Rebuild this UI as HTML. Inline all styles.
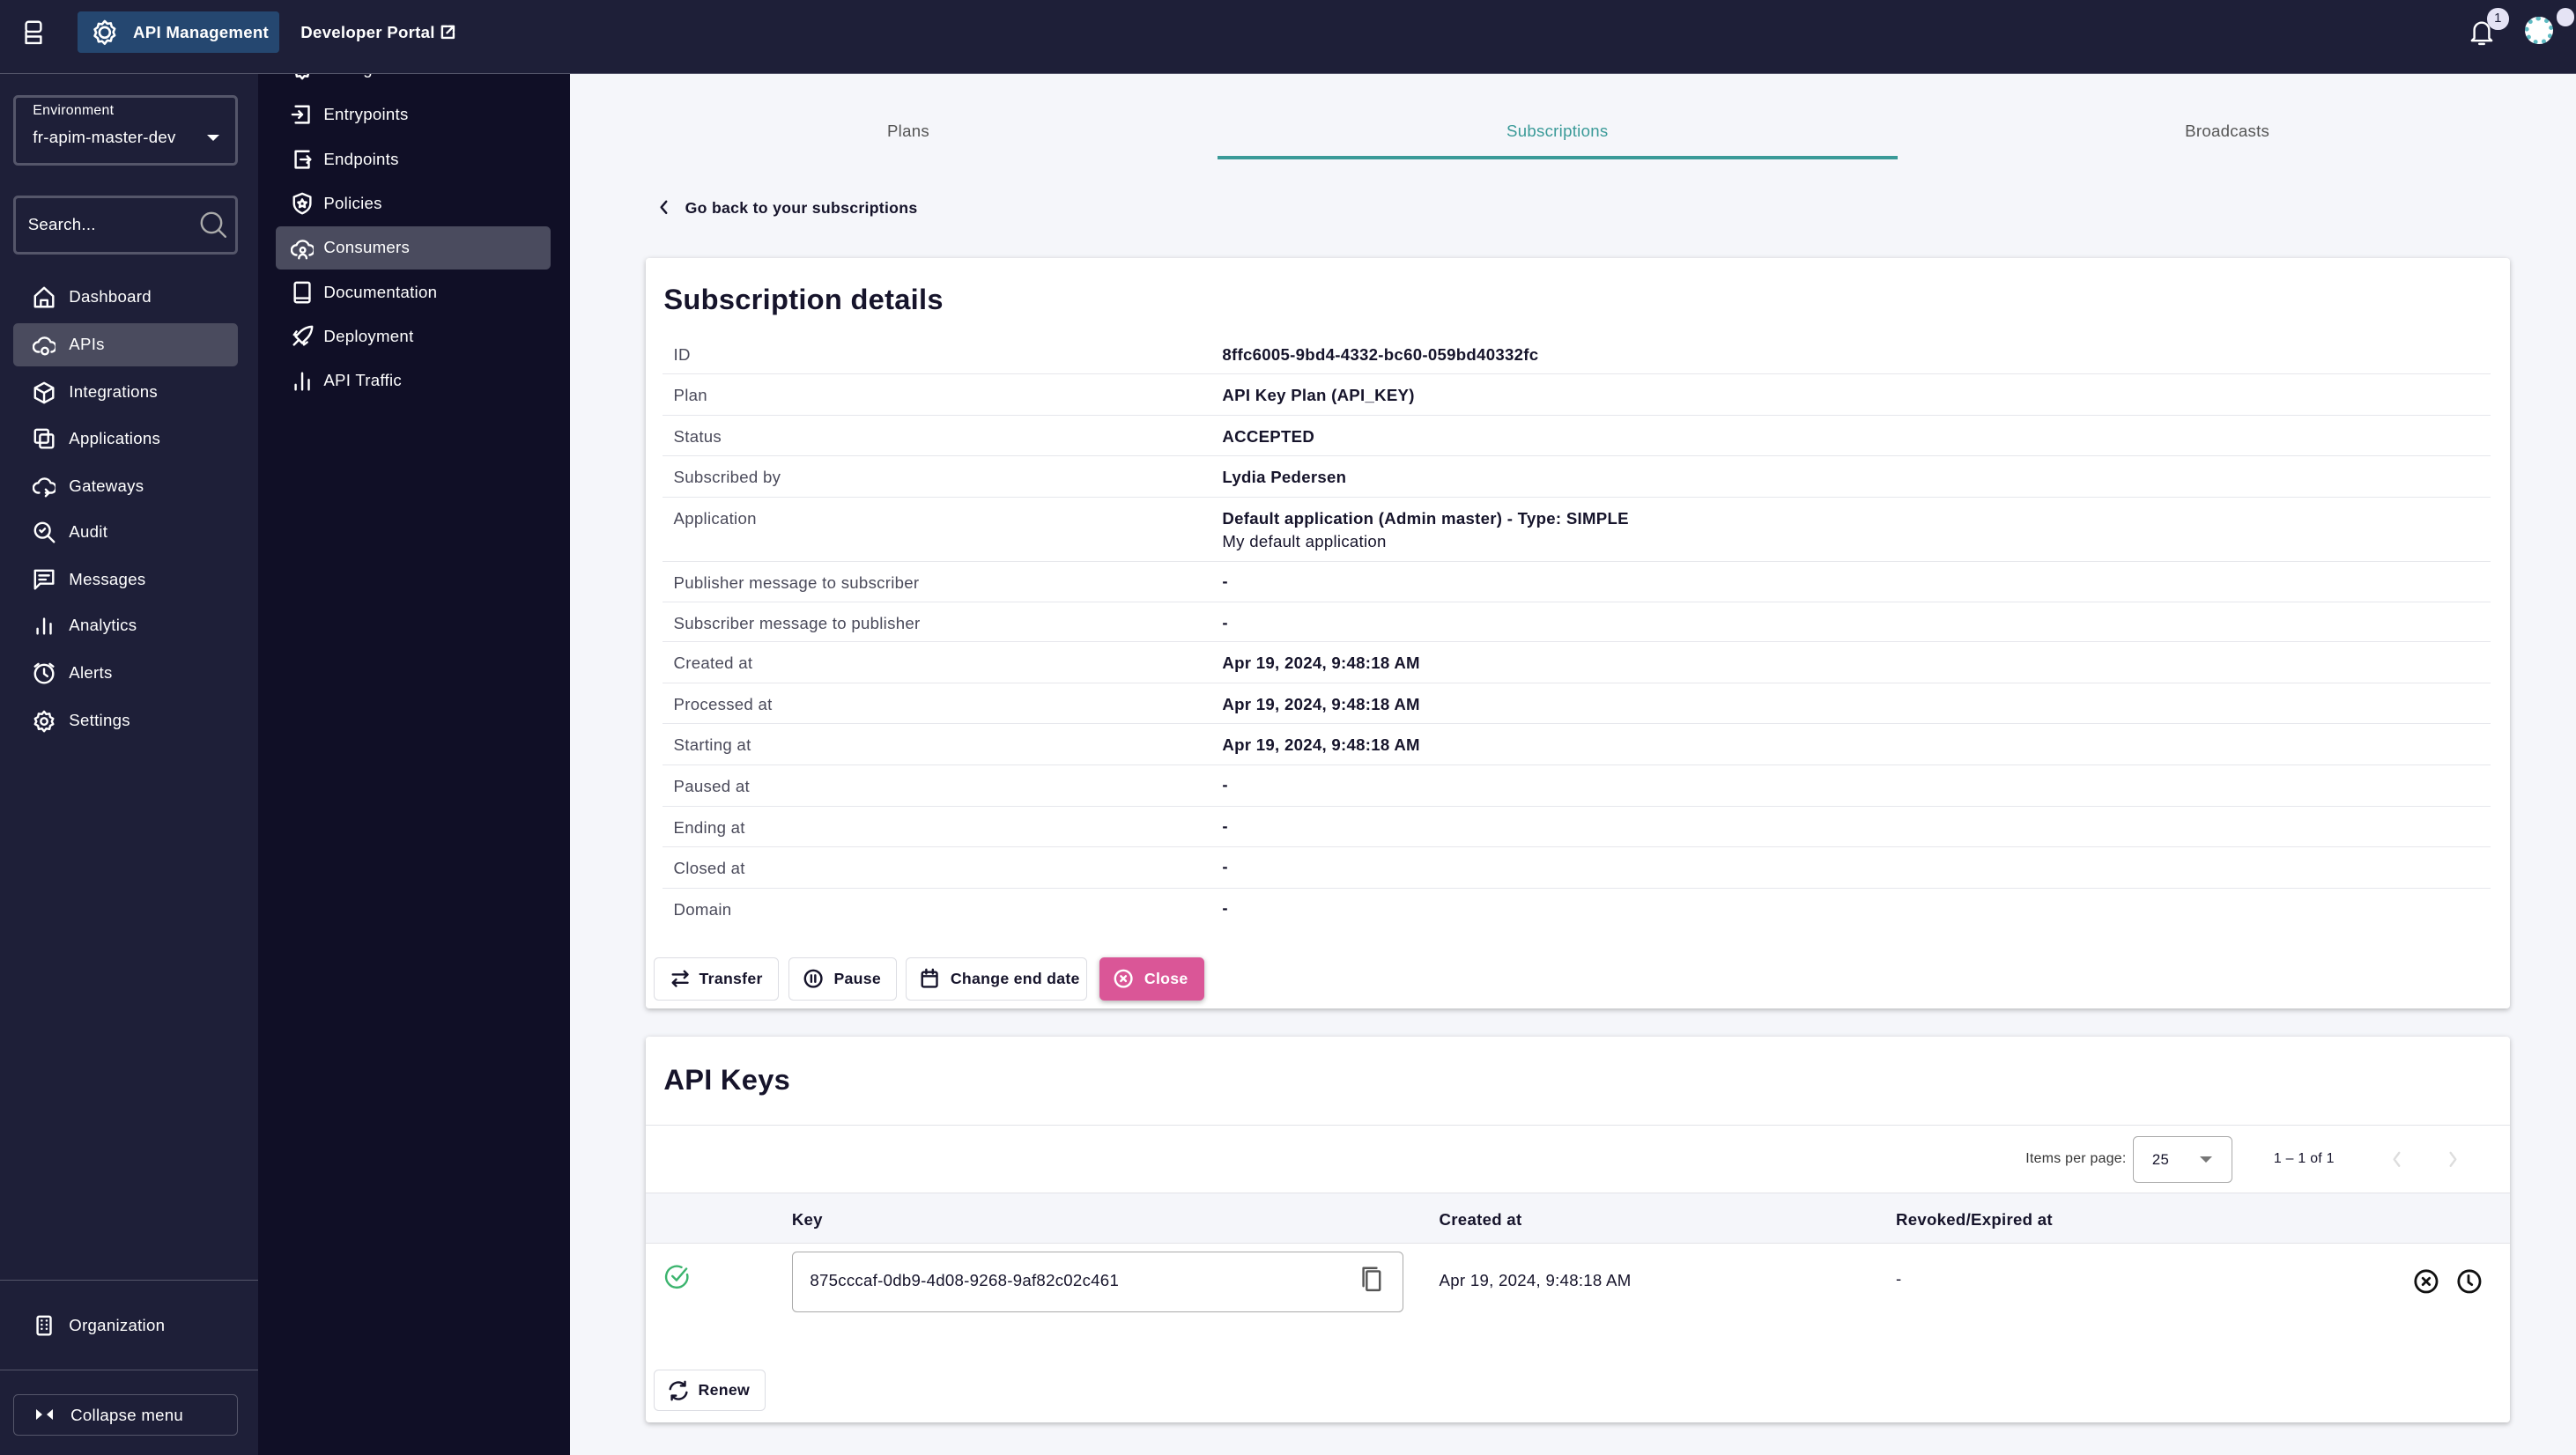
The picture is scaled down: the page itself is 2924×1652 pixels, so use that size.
<!DOCTYPE html>
<html><head><meta charset="utf-8"><style>
*{box-sizing:border-box;margin:0;padding:0}
html,body{width:2924px;height:1652px;overflow:hidden;background:#f5f6fa}
#r{zoom:1.86480;width:1568px;height:886px;position:relative;font-family:"Liberation Sans",sans-serif;font-size:10px;color:#16142b;letter-spacing:.15px}
.a{position:absolute}
svg{position:absolute;fill:none;stroke:currentColor;stroke-width:1.3;stroke-linecap:round;stroke-linejoin:round}
.top{left:0;top:0;width:1568px;height:45px;background:#1e1f38;border-bottom:1px solid #55566a;z-index:5}
.tz{z-index:6}
.sb{left:0;top:45px;width:157px;height:841px;background:#1e1f38;color:#fff}
.sb2{left:157px;top:45px;width:190px;height:841px;background:#100f26;color:#fff}
.ni{position:absolute;left:8px;width:137px;height:26px;border-radius:3px;font-size:10px;color:#fff}
.ni span{position:absolute;left:34px;top:7px}
.ni svg{left:12px;top:6px;width:14px;height:14px}
.n2{position:absolute;left:11px;width:167px;height:26px;border-radius:3px}
.n2 span{position:absolute;left:29px;top:7px}
.n2 svg{left:9px;top:6px;width:14px;height:14px}
.card{background:#fff;box-shadow:0 1px 3px rgba(0,0,0,.25);border-radius:2px}
.row{position:absolute;left:10px;width:1113px;border-bottom:1px solid #e6e7ec}
.row .l{position:absolute;left:7px;color:#4a4a5a}
.row .v{position:absolute;left:341px;font-weight:bold;color:#16142b}
.btn{position:absolute;top:583px;height:26px;border:1px solid #dcdde3;border-radius:3px;background:#fff;font-weight:bold;font-size:9.5px}
.btn span{position:absolute;top:7px}
.btn svg{top:6px;width:13px;height:13px}
</style></head><body><div id="r">
<div class="a top"></div>
<svg class="tz" style="left:13px;top:11px;width:16px;height:18px;color:#fff" viewBox="0 0 16 18"><rect x="3" y="2" width="9" height="6" rx="1.5"/><path d="M3 8v3h9M3 11v4h9v-4"/></svg>
<div class="a tz" style="left:47px;top:7px;width:123px;height:25px;background:#254770;border-radius:2px"></div>
<svg class="tz" style="left:55px;top:11px;width:17px;height:17px;color:#fff" viewBox="0 0 16 16"><circle cx="8" cy="8" r="3"/><path d="M8 1.5l1.5 1.5 2-.3.5 2 1.7 1.2-.8 1.9.8 1.9-1.7 1.2-.5 2-2-.3L8 14.5 6.5 13l-2 .3-.5-2L2.3 10l.8-1.9-.8-1.9L4 5l.5-2 2 .3z"/></svg>
<div class="a tz" style="left:81px;top:14px;color:#fff;font-weight:bold;font-size:10px">API Management</div>
<div class="a tz" style="left:183px;top:14px;color:#fff;font-weight:bold;font-size:10px">Developer Portal</div>
<svg class="tz" style="left:268px;top:15px;width:9px;height:9px;color:#fff" viewBox="0 0 9 9"><path d="M4 1H1v7h7V5M5 1h3v3M8 1L4 5"/></svg>
<svg class="tz" style="left:1503px;top:11px;width:15px;height:17px;color:#fff" viewBox="0 0 15 17"><path d="M3 12V7a4.5 4.5 0 0 1 9 0v5l1.5 1.5h-12zM6 15.5h3"/></svg>
<div class="a tz" style="left:1514px;top:5px;width:13px;height:13px;border-radius:50%;background:#e5e3f5;color:#1e1f38;font-size:8px;text-align:center;line-height:13px">1</div>
<div class="a tz" style="left:1537px;top:10px;width:17px;height:17px;border-radius:50%;background:#fff;border:3px dotted #5ebac2"></div>
<div class="a tz" style="left:1556px;top:5px;width:11px;height:11px;border-radius:50%;background:#e5e3f5"></div>

<div class="a sb">
<div class="a" style="left:8px;top:13px;width:137px;height:43px;border:2px solid #55566a;border-radius:3px"></div>
<div class="a" style="left:20px;top:18px;font-size:8.5px">Environment</div>
<div class="a" style="left:20px;top:33px;font-size:10px">fr-apim-master-dev</div>
<div class="a" style="left:126px;top:37px;border:4px solid transparent;border-top:4px solid #fff"></div>
<div class="a" style="left:8px;top:74px;width:137px;height:36px;border:2px solid #55566a;border-radius:3px"></div>
<div class="a" style="left:17px;top:86px;font-size:10px">Search...</div>
<svg style="left:121px;top:83px;width:17px;height:17px;color:#aaa" viewBox="0 0 17 17"><circle cx="7.5" cy="7.5" r="6"/><path d="M12 12l4 4"/></svg>
<div class="ni" style="top:123px"><svg viewBox="0 0 14 14"><path d="M1.5 6.5L7 1.5l5.5 5V13h-11zM5 13V9h4v4"/></svg><span>Dashboard</span></div>
<div class="ni" style="top:152px;background:#4a4b5e"><svg viewBox="0 0 14 14"><path d="M4 11H3.5a3 3 0 0 1 0-6 4 4 0 0 1 7.5 0 3 3 0 0 1 .5 6"/><circle cx="7.5" cy="10.5" r="2"/></svg><span>APIs</span></div>
<div class="ni" style="top:181px"><svg viewBox="0 0 14 14"><path d="M7 1l5.5 3v6L7 13 1.5 10V4zM1.5 4L7 7l5.5-3M7 7v6"/></svg><span>Integrations</span></div>
<div class="ni" style="top:209px"><svg viewBox="0 0 14 14"><rect x="1.5" y="1.5" width="8" height="8" rx="1"/><rect x="4.5" y="4.5" width="8" height="8" rx="1"/></svg><span>Applications</span></div>
<div class="ni" style="top:238px"><svg viewBox="0 0 14 14"><path d="M4 11H3.5a3 3 0 0 1 0-6 4 4 0 0 1 7.5 0 3 3 0 0 1 .5 6H8"/><path d="M8 9l2 2-2 2"/></svg><span>Gateways</span></div>
<div class="ni" style="top:266px"><svg viewBox="0 0 14 14"><circle cx="6" cy="6" r="4.5"/><path d="M9.5 9.5L13 13M4.5 6l1 1 2-2"/></svg><span>Audit</span></div>
<div class="ni" style="top:295px"><svg viewBox="0 0 14 14"><path d="M1.5 1.5h11v8h-8l-3 3zM4 4.5h6M4 7h4"/></svg><span>Messages</span></div>
<div class="ni" style="top:323px"><svg viewBox="0 0 14 14"><path d="M3 12V9M7 12V3M11 12V6"/></svg><span>Analytics</span></div>
<div class="ni" style="top:352px"><svg viewBox="0 0 14 14"><circle cx="7" cy="7" r="5.5"/><path d="M7 4v3l2 1.5M1.5 2.5l2-1.5M12.5 2.5l-2-1.5"/></svg><span>Alerts</span></div>
<div class="ni" style="top:381px"><svg viewBox="0 0 14 14"><circle cx="7" cy="7" r="2"/><path d="M7 1l1.3 1.6 2-.3.4 2 1.8 1L11.7 7l.8 1.7-1.8 1-.4 2-2-.3L7 13l-1.3-1.6-2 .3-.4-2-1.8-1L2.3 7l-.8-1.7 1.8-1 .4-2 2 .3z"/></svg><span>Settings</span></div>
<div class="a" style="left:0;top:734px;width:157px;border-top:1px solid #55566a"></div>
<div class="ni" style="top:749px"><svg viewBox="0 0 14 14"><rect x="3" y="1.5" width="8" height="11" rx="1"/><path d="M5.5 4h.1M8.5 4h.1M5.5 6.5h.1M8.5 6.5h.1M5.5 9h.1M8.5 9h.1"/></svg><span>Organization</span></div>
<div class="a" style="left:0;top:789px;width:157px;border-top:1px solid #55566a"></div>
<div class="a" style="left:8px;top:804px;width:137px;height:25px;border:1px solid #55566a;border-radius:3px"></div>
<div class="a" style="left:22px;top:813px;width:0;height:0;border:3.5px solid transparent;border-left:4px solid #fff"></div>
<div class="a" style="left:28px;top:813px;width:0;height:0;border:3.5px solid transparent;border-right:4px solid #fff;margin-left:-3px"></div>
<div class="a" style="left:43px;top:811px;font-size:10px">Collapse menu</div>
</div>

<div class="a sb2">
<svg style="left:20px;top:-10px;width:14px;height:14px;color:#fff" viewBox="0 0 14 14"><circle cx="7" cy="7" r="2"/><path d="M7 1l1.3 1.6 2-.3.4 2 1.8 1L11.7 7l.8 1.7-1.8 1-.4 2-2-.3L7 13l-1.3-1.6-2 .3-.4-2-1.8-1L2.3 7l-.8-1.7 1.8-1 .4-2 2 .3z"/></svg>
<div class="a" style="left:40px;top:-9px;font-size:10px;color:#fff">Configuration</div>
<div class="n2" style="top:12px"><svg viewBox="0 0 14 14"><path d="M3 2h8v10H3M1 7h6M5 5l2 2-2 2"/></svg><span>Entrypoints</span></div>
<div class="n2" style="top:39px"><svg viewBox="0 0 14 14"><path d="M11 2H3v10h8V9M6 7h6M10 5l2 2-2 2"/></svg><span>Endpoints</span></div>
<div class="n2" style="top:66px"><svg viewBox="0 0 14 14"><path d="M7 1l5 2v4c0 3-2.5 5-5 6-2.5-1-5-3-5-6V3z"/><path d="M7 4.5l.8 1.6 1.7.2-1.2 1.2.3 1.7L7 8.4l-1.6.8.3-1.7-1.2-1.2 1.7-.2z"/></svg><span>Policies</span></div>
<div class="n2" style="top:93px;background:#4a4b5e"><svg viewBox="0 0 14 14"><path d="M3.5 11a3 3 0 0 1 0-6 4 4 0 0 1 7.5 0 3 3 0 0 1 .5 6"/><circle cx="7.3" cy="8" r="1.5"/><path d="M5 13a2.3 2.3 0 0 1 4.6 0"/></svg><span>Consumers</span></div>
<div class="n2" style="top:120px"><svg viewBox="0 0 14 14"><rect x="2.5" y="1" width="9" height="12" rx="1"/><path d="M2.5 10.5h9"/></svg><span>Documentation</span></div>
<div class="n2" style="top:147px"><svg viewBox="0 0 14 14"><path d="M5 9l-2-2 3-3c2-2 5-3 7-3 0 2-1 5-3 7l-3 3-2-2zM5 9l-3 3M4 6H2l1.5-2M8 10v2l2-1.5"/></svg><span>Deployment</span></div>
<div class="n2" style="top:174px"><svg viewBox="0 0 14 14"><path d="M3 12V9M7 12V2M11 12V6"/></svg><span>API Traffic</span></div>
</div>

<div class="a" style="left:540px;top:74px;color:#555">Plans</div>
<div class="a" style="left:917px;top:74px;color:#3a9a98">Subscriptions</div>
<div class="a" style="left:1330px;top:74px;color:#555">Broadcasts</div>
<div class="a" style="left:741px;top:95px;width:414px;height:2px;background:#3a9a98"></div>
<svg style="left:400px;top:121px;width:8px;height:10px" viewBox="0 0 8 10"><path d="M5.5 1.5L2.5 5l3 3.5"/></svg>
<div class="a" style="left:417px;top:121px;font-weight:bold;font-size:9.5px">Go back to your subscriptions</div>

<div class="a card" style="left:393px;top:157px;width:1135px;height:457px">
<div class="a" style="left:11px;top:15px;font-size:17.5px;font-weight:bold">Subscription details</div>
<div class="row" style="top:46px;height:25px"><span class="l" style="top:7px">ID</span><span class="v" style="top:7px">8ffc6005-9bd4-4332-bc60-059bd40332fc</span></div>
<div class="row" style="top:71px;height:25px"><span class="l" style="top:7px">Plan</span><span class="v" style="top:7px">API Key Plan (API_KEY)</span></div>
<div class="row" style="top:96px;height:25px"><span class="l" style="top:7px">Status</span><span class="v" style="top:7px">ACCEPTED</span></div>
<div class="row" style="top:121px;height:25px"><span class="l" style="top:7px">Subscribed by</span><span class="v" style="top:7px">Lydia Pedersen</span></div>
<div class="row" style="top:146px;height:39px"><span class="l" style="top:7px">Application</span><span class="v" style="top:7px">Default application (Admin master) - Type: SIMPLE</span><span class="v" style="top:21px;font-weight:normal">My default application</span></div>
<div class="row" style="top:185px;height:25px"><span class="l" style="top:7px">Publisher message to subscriber</span><span class="v" style="top:6px">-</span></div>
<div class="row" style="top:210px;height:24px"><span class="l" style="top:7px">Subscriber message to publisher</span><span class="v" style="top:6px">-</span></div>
<div class="row" style="top:234px;height:25px"><span class="l" style="top:7px">Created at</span><span class="v" style="top:7px">Apr 19, 2024, 9:48:18 AM</span></div>
<div class="row" style="top:259px;height:25px"><span class="l" style="top:7px">Processed at</span><span class="v" style="top:7px">Apr 19, 2024, 9:48:18 AM</span></div>
<div class="row" style="top:284px;height:25px"><span class="l" style="top:7px">Starting at</span><span class="v" style="top:7px">Apr 19, 2024, 9:48:18 AM</span></div>
<div class="row" style="top:309px;height:25px"><span class="l" style="top:7px">Paused at</span><span class="v" style="top:6px">-</span></div>
<div class="row" style="top:334px;height:25px"><span class="l" style="top:7px">Ending at</span><span class="v" style="top:6px">-</span></div>
<div class="row" style="top:359px;height:25px"><span class="l" style="top:7px">Closed at</span><span class="v" style="top:6px">-</span></div>
<div class="row" style="top:384px;height:25px;border:0"><span class="l" style="top:7px">Domain</span><span class="v" style="top:6px">-</span></div>
</div>
<div class="btn" style="left:398px;width:76px"><svg style="left:9px" viewBox="0 0 13 13"><path d="M2 4h9M9 2l2 2-2 2M11 9H2M4 7L2 9l2 2"/></svg><span style="left:27px">Transfer</span></div>
<div class="btn" style="left:480px;width:66px"><svg style="left:8px" viewBox="0 0 13 13"><circle cx="6.5" cy="6.5" r="5"/><path d="M5.3 4.5v4M7.7 4.5v4"/></svg><span style="left:27px">Pause</span></div>
<div class="btn" style="left:551px;width:111px"><svg style="left:8px" viewBox="0 0 13 13"><rect x="2" y="2.5" width="9" height="9" rx="1"/><path d="M2 5h9M4.5 1v2.5M8.5 1v2.5"/></svg><span style="left:27px">Change end date</span></div>
<div class="btn" style="left:669px;width:64px;background:#da5697;border-color:#da5697;color:#fff;box-shadow:0 1px 3px rgba(0,0,0,.3)"><svg style="left:8px" viewBox="0 0 13 13"><circle cx="6.5" cy="6.5" r="5"/><path d="M5 5l3 3M8 5l-3 3"/></svg><span style="left:27px">Close</span></div>

<div class="a card" style="left:393px;top:631px;width:1135px;height:235px">
<div class="a" style="left:11px;top:16px;font-size:17.5px;font-weight:bold">API Keys</div>
<div class="a" style="left:0;top:54px;width:1135px;border-top:1px solid #e2e3e8"></div>
<div class="a" style="left:840px;top:70px;font-size:8.5px;color:#333">Items per page:</div>
<div class="a" style="left:905px;top:61px;width:61px;height:28px;border:1px solid #aaa;border-radius:3px"></div>
<div class="a" style="left:917px;top:70px;font-size:9px">25</div>
<div class="a" style="left:946px;top:73px;border:4px solid transparent;border-top:4px solid #777"></div>
<div class="a" style="left:991px;top:70px;font-size:8.5px">1 – 1 of 1</div>
<svg style="left:1062px;top:70px;width:8px;height:10px;color:#ddd" viewBox="0 0 8 10"><path d="M5.5 1L2.5 5l3 4"/></svg>
<svg style="left:1096px;top:70px;width:8px;height:10px;color:#ddd" viewBox="0 0 8 10"><path d="M2.5 1l3 4-3 4"/></svg>
<div class="a" style="left:0;top:95px;width:1135px;height:31px;background:#f5f6fa;border-top:1px solid #e2e3e8;border-bottom:1px solid #e2e3e8"></div>
<div class="a" style="left:89px;top:106px;font-weight:bold">Key</div>
<div class="a" style="left:483px;top:106px;font-weight:bold">Created at</div>
<div class="a" style="left:761px;top:106px;font-weight:bold">Revoked/Expired at</div>
<svg style="left:11px;top:138px;width:17px;height:17px;color:#3cb46e" viewBox="0 0 17 17"><path d="M14.5 7A6.5 6.5 0 1 1 11 2.6"/><path d="M5.5 8l2.5 2.5 6-7"/></svg>
<div class="a" style="left:89px;top:131px;width:372px;height:37px;border:1px solid #aaa;border-radius:3px"></div>
<div class="a" style="left:100px;top:143px">875cccaf-0db9-4d08-9268-9af82c02c461</div>
<svg style="left:434px;top:139px;width:16px;height:17px;color:#555" viewBox="0 0 16 17"><rect x="5" y="4" width="8" height="11.5" rx=".5"/><path d="M3 13V2h8"/></svg>
<div class="a" style="left:483px;top:143px">Apr 19, 2024, 9:48:18 AM</div>
<div class="a" style="left:761px;top:142px">-</div>
<svg style="left:1076px;top:141px;width:16px;height:16px;color:#111;stroke-width:1.5" viewBox="0 0 16 16"><circle cx="8" cy="8" r="6.5"/><path d="M6 6l4 4M10 6l-4 4"/></svg>
<svg style="left:1102px;top:141px;width:16px;height:16px;color:#111;stroke-width:1.5" viewBox="0 0 16 16"><circle cx="8" cy="8" r="6.5"/><path d="M7.5 4.5V8.5l2 1.5"/></svg>
<div class="a" style="left:5px;top:203px;width:68px;height:25px;border:1px solid #dcdde3;border-radius:3px"></div>
<svg style="left:13px;top:209px;width:14px;height:14px" viewBox="0 0 14 14"><path d="M2 6a5 5 0 0 1 9-2M12 8a5 5 0 0 1-9 2M11 1.5V4H8.5M3 12.5V10h2.5"/></svg>
<div class="a" style="left:32px;top:210px;font-weight:bold;font-size:9.5px">Renew</div>
</div>
</div></body></html>
